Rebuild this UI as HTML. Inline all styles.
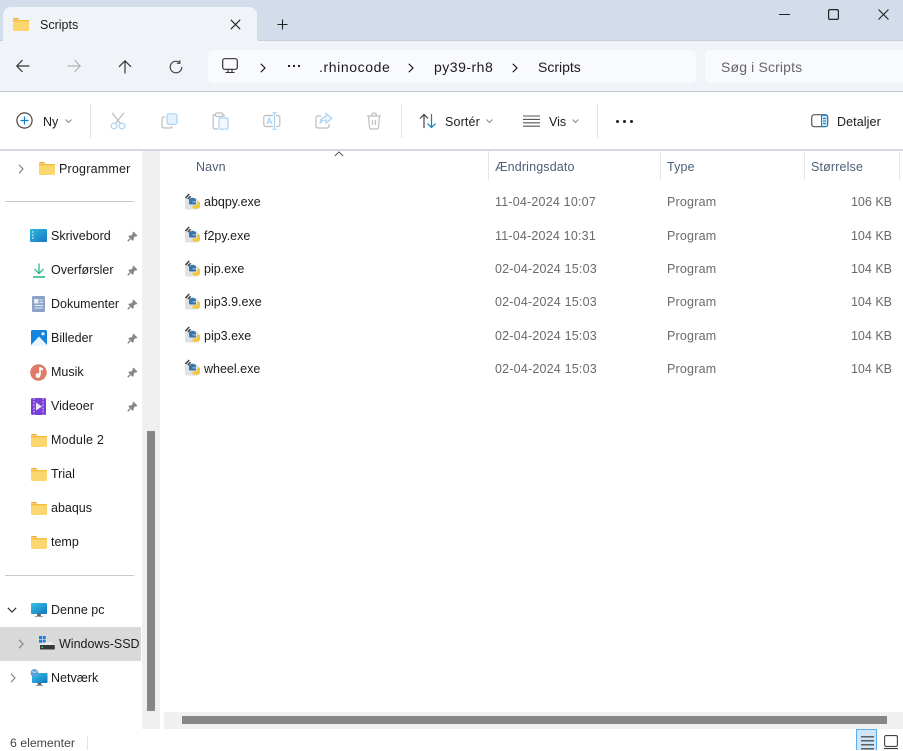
<!DOCTYPE html>
<html><head><meta charset="utf-8"><style>
html,body{margin:0;padding:0}
body{width:903px;height:750px;overflow:hidden;background:#fff;position:relative;font-family:"Liberation Sans",sans-serif;font-size:12.5px;color:#1b1b1b;filter:blur(.25px)}
.t{position:absolute;white-space:nowrap;line-height:16px}
.b{position:absolute}
svg{position:absolute;overflow:visible}
.n{font-size:12.5px}
.h{color:#4c607a;font-size:12.5px;letter-spacing:.15px}
.g{color:#6a6a6a;letter-spacing:.2px}
.r{text-align:right;width:60px;left:832px;color:#6a6a6a}
.s{fill:none;stroke:#333;stroke-width:1.2}
.d{fill:none;stroke:#bdbdbd;stroke-width:1.2}
.l{fill:none;stroke:#a9d3f5;stroke-width:1.2}
.f{color:#1b1b1b;font-size:12.5px}
</style></head><body>
<svg width="0" height="0" style="position:absolute"><defs>
<symbol id="folder" viewBox="0 0 16 13"><path d="M0 1.2Q0 0 1.2 0H5L6.5 1.5H0Z" fill="#e8a92c"/><path d="M0 2H14.8Q16 2 16 3.2V11.8Q16 13 14.8 13H1.2Q0 13 0 11.8Z" fill="#fcd66e"/><path d="M0 2H16V3.4H0Z" fill="#f4bf3e"/></symbol>
<symbol id="py" viewBox="0 0 17 17"><path d="M1 3.5H9L14.5 7V16.5H2.5Q1 16.5 1 15Z" fill="#dfe1e4"/><path d="M1.5 5L5.2 1M4 6L6.5 3.2" stroke="#3a3a3a" stroke-width="1.4" fill="none"/><path d="M5 10.5V7Q5 5 8.5 5T12 7V8.5H8.5V9.2H11.5Q12 9.2 12 10V11.5H7Q5 11.5 5 10.5Z" fill="#3776ab"/><path d="M16 9.5V13.5Q16 15.8 12 15.8T8.5 13.5V12.5H12V12.2Q12.8 12 13 11V8.5H15Q16 8.5 16 9.5Z" fill="#f5c63a"/></symbol>
<symbol id="pin" viewBox="0 0 12 12"><path d="M7 .6L11.4 5 10 6 8.9 5.8 7.3 7.5V9.8L6 10.6 1.5 6.1 2.3 4.9H4.6L6.2 3.2 6.1 1.9Z" fill="#868686"/><path d="M3.5 8.5L.8 11.2" stroke="#868686" stroke-width="1.5"/></symbol>
<symbol id="chev" viewBox="0 0 6 10"><path d="M1 .8L5 5 1 9.2" fill="none" stroke="#7d7d7d" stroke-width="1.1"/></symbol>
</defs></svg>

<!-- Title bar -->
<div class="b" style="left:0;top:0;width:903px;height:41px;background:#d3dcea"></div>
<div class="b" style="left:3px;top:7px;width:254px;height:34px;background:#f0f4f9;border-radius:8px 8px 0 0"></div>
<div class="b" style="left:0;top:41px;width:903px;height:50px;background:#f0f4f9"></div>
<div class="b" style="left:0;top:40px;width:903px;height:1px;background:#c9d0dd"></div>
<div class="b" style="left:3px;top:40px;width:255px;height:1px;background:#f0f4f9"></div>
<svg style="left:13px;top:18px" width="16" height="13"><use href="#folder" width="16" height="13"/></svg>
<div class="t" style="left:40px;top:17px">Scripts</div>
<svg style="left:230px;top:19px" width="11" height="11"><path d="M.8.8L10.2 10.2M10.2.8L.8 10.2" stroke="#222" stroke-width="1.1"/></svg>
<svg style="left:277px;top:19px" width="11" height="11"><path d="M5.5.5V10.5M.5 5.5H10.5" stroke="#222" stroke-width="1.1"/></svg>
<svg style="left:779px;top:14px" width="11" height="2"><path d="M0 .5H11" stroke="#222" stroke-width="1"/></svg>
<svg style="left:828px;top:9px" width="11" height="11"><rect x=".6" y=".6" width="9.8" height="9.8" rx="1.4" fill="none" stroke="#222" stroke-width="1.2"/></svg>
<svg style="left:878px;top:9px" width="11" height="11"><path d="M.5.5L10.5 10.5M10.5.5L.5 10.5" stroke="#222" stroke-width="1.1"/></svg>

<!-- Nav -->
<svg style="left:16px;top:59px" width="14" height="14"><path d="M.8 7H13.5M6.5 1L.8 7 6.5 13" fill="none" stroke="#333" stroke-width="1.2"/></svg>
<svg style="left:67px;top:59px" width="14" height="14"><path d="M.5 7H13.2M7.5 1L13.2 7 7.5 13" fill="none" stroke="#b3b5b8" stroke-width="1.2"/></svg>
<svg style="left:118px;top:60px" width="14" height="14"><path d="M7 .8V13.5M1 6.8L7 .8 13 6.8" fill="none" stroke="#333" stroke-width="1.2"/></svg>
<svg style="left:169px;top:60px" width="14" height="14"><path d="M12.8 7A5.8 5.8 0 1 1 10.5 2.4M10.8 .3V3.3H7.8" fill="none" stroke="#444" stroke-width="1.2"/></svg>
<div class="b" style="left:208px;top:50px;width:488px;height:33px;background:#f9fafd;border-radius:5px"></div>
<div class="b" style="left:705px;top:50px;width:198px;height:33px;background:#f9fafd;border-radius:5px 0 0 5px"></div>
<svg style="left:222px;top:58px" width="17" height="16"><rect x=".7" y=".7" width="14.6" height="10.6" rx="2" fill="none" stroke="#333" stroke-width="1.2"/><path d="M6 11.5V14M10 11.5V14M3.5 14.5H12.5" fill="none" stroke="#333" stroke-width="1.1"/></svg>
<svg style="left:260px;top:63px" width="6" height="10"><path d="M.8.8L5 5 .8 9.2" fill="none" stroke="#222" stroke-width="1.2"/></svg>
<div class="b" style="left:288px;top:65px;width:2px;height:2px;background:#222;box-shadow:5px 0 #222,10px 0 #222"></div>
<div class="t" style="left:319px;top:59px;font-size:14px;letter-spacing:.6px">.rhinocode</div>
<svg style="left:408px;top:63px" width="6" height="10"><path d="M.8.8L5 5 .8 9.2" fill="none" stroke="#222" stroke-width="1.2"/></svg>
<div class="t" style="left:434px;top:59px;font-size:14px;letter-spacing:.5px">py39-rh8</div>
<svg style="left:512px;top:63px" width="6" height="10"><path d="M.8.8L5 5 .8 9.2" fill="none" stroke="#222" stroke-width="1.2"/></svg>
<div class="t" style="left:538px;top:59px;font-size:14px">Scripts</div>
<div class="t" style="left:721px;top:59px;font-size:14px;color:#666;letter-spacing:.15px">Søg i Scripts</div>

<div class="b" style="left:0;top:91px;width:903px;height:1px;background:#bfc5d2"></div>

<!-- Toolbar -->
<svg style="left:16px;top:112px" width="17" height="17"><circle cx="8.5" cy="8.5" r="7.6" fill="none" stroke="#444" stroke-width="1.2"/><path d="M8.5 4.5V12.5M4.5 8.5H12.5" stroke="#0b7fd4" stroke-width="1.2"/></svg>
<div class="t" style="left:43px;top:114px">Ny</div>
<svg style="left:65px;top:119px" width="7" height="5"><path d="M.5.5L3.5 3.5 6.5.5" fill="none" stroke="#888" stroke-width="1"/></svg>
<div class="b" style="left:90px;top:104px;width:1px;height:34px;background:#e3e3e3"></div>
<svg style="left:110px;top:112px" width="16" height="18"><path d="M2 .8L10.5 11.5M14 .8L5.5 11.5" class="d"/><circle cx="4" cy="14" r="2.9" class="l"/><circle cx="12" cy="14" r="2.9" class="l"/></svg>
<svg style="left:161px;top:113px" width="17" height="16"><path d="M4 4H2.8Q1 4 1 6V12.5Q1 15 3.5 15H9Q11 15 11 13.5" class="d"/><rect x="6" y=".8" width="10" height="10.5" rx="2" fill="#e4f2fd" stroke="#a9d3f5" stroke-width="1.2"/></svg>
<svg style="left:212px;top:112px" width="17" height="18"><path d="M10 3H12V5M3 3H1.2V15Q1.2 17 3 17H6" class="d"/><rect x="3.5" y="1" width="7" height="3.5" rx="1.2" class="d"/><rect x="7" y="6" width="9" height="11.2" rx="1.5" fill="#f1f8fe" stroke="#a9d3f5" stroke-width="1.2"/></svg>
<svg style="left:263px;top:112px" width="18" height="18"><rect x=".8" y="3.5" width="16" height="11" rx="2" class="d"/><rect x="10" y="1" width="3" height="16" fill="#fff"/><path d="M9.5.7H13.5M11.5.7V17.3M9.5 17.3H13.5" class="l"/><path d="M3.8 12L6.3 6 8.8 12M4.8 10H7.8" class="l"/></svg>
<svg style="left:315px;top:112px" width="18" height="17"><path d="M6 4H3Q1 4 1 6V14Q1 16 3 16H12Q14 16 14 14V12" class="d"/><path d="M11 1.5L16.8 6.5 11 11V8.3Q7 8 5 11.5 5.5 5.5 11 4.7Z" fill="#eef7fe" stroke="#a9d3f5" stroke-width="1.2"/></svg>
<svg style="left:366px;top:112px" width="16" height="18"><path d="M1 4H15M2.5 4L3.5 15.5Q3.7 17 5 17H11Q12.3 17 12.5 15.5L13.5 4M5.5 4Q5.5 1 8 1T10.5 4M6.5 8V13M9.5 8V13" class="d"/></svg>
<div class="b" style="left:401px;top:104px;width:1px;height:34px;background:#e3e3e3"></div>
<svg style="left:419px;top:113px" width="18" height="16"><path d="M5 15V1.5M1 5.5L5 1.5 9 5.5" fill="none" stroke="#333" stroke-width="1.1"/><path d="M12.5 1V14.5M8.5 10.5L12.5 14.5 16.5 10.5" fill="none" stroke="#0b7fd4" stroke-width="1.2"/></svg>
<div class="t" style="left:445px;top:114px;letter-spacing:.15px">Sortér</div>
<svg style="left:486px;top:119px" width="7" height="5"><path d="M.5.5L3.5 3.5 6.5.5" fill="none" stroke="#888" stroke-width="1"/></svg>
<svg style="left:523px;top:115px" width="18" height="12"><path d="M0 1H17M0 4.4H17M0 7.8H17M0 11.2H17" stroke="#555" stroke-width="1.1"/></svg>
<div class="t" style="left:549px;top:114px">Vis</div>
<svg style="left:572px;top:119px" width="7" height="5"><path d="M.5.5L3.5 3.5 6.5.5" fill="none" stroke="#888" stroke-width="1"/></svg>
<div class="b" style="left:597px;top:104px;width:1px;height:34px;background:#e3e3e3"></div>
<div class="b" style="left:616px;top:120px;width:3px;height:3px;border-radius:50%;background:#222;box-shadow:7px 0 #222,14px 0 #222"></div>
<svg style="left:811px;top:114px" width="18" height="14"><rect x=".7" y=".7" width="16" height="12" rx="2.5" fill="none" stroke="#555" stroke-width="1.2"/><path d="M10.5 1.2H14.5Q16.5 1.2 16.5 3V11Q16.5 12.5 14.5 12.5H10.5Z" fill="#cfe7fa" stroke="#0b7fd4" stroke-width="1"/><path d="M12 4.5H15M12 7H15M12 9.5H15" stroke="#0b7fd4" stroke-width="1"/></svg>
<div class="t" style="left:837px;top:114px;letter-spacing:.1px">Detaljer</div>

<div class="b" style="left:0;top:149px;width:903px;height:2px;background:#d5d8e2"></div>

<!-- Sidebar -->
<svg style="left:18px;top:164px" width="6" height="10"><use href="#chev" width="6" height="10"/></svg>
<svg style="left:39px;top:162px" width="16" height="13"><use href="#folder" width="16" height="13"/></svg>
<div class="t f" style="left:59px;top:161px;letter-spacing:.2px">Programmer</div>
<div class="b" style="left:5px;top:201px;width:129px;height:1px;background:#c9c9c9"></div>

<svg style="left:30px;top:229px" width="17" height="14"><defs><linearGradient id="gd" x1="0" y1="0" x2="1" y2="1"><stop offset="0" stop-color="#2ab7dc"/><stop offset="1" stop-color="#1a78c2"/></linearGradient></defs><rect width="17" height="13" rx="1" fill="url(#gd)"/><path d="M2 3H3.5M2 6H3.5M2 9H3.5" stroke="#dff4fb" stroke-width="1.2"/></svg>
<div class="t f" style="left:51px;top:228px">Skrivebord</div>
<svg style="left:127px;top:231px" width="11" height="11"><use href="#pin" width="11" height="11"/></svg>

<svg style="left:32px;top:263px" width="14" height="15"><path d="M7 .5V10.5M2.5 6L7 10.5 11.5 6" fill="none" stroke="#1fb285" stroke-width="1.2"/><path d="M1 14H13" stroke="#1fb285" stroke-width="1.5"/></svg>
<div class="t f" style="left:51px;top:262px">Overførsler</div>
<svg style="left:127px;top:265px" width="11" height="11"><use href="#pin" width="11" height="11"/></svg>

<svg style="left:32px;top:296px" width="14" height="17"><rect width="13" height="16" rx="1" fill="#8ba3c8"/><path d="M2.5 3.5H6V7H2.5Z M7.5 4H11 M7.5 6.5H11 M2.5 9.5H11 M2.5 12H11" fill="#e7edf6" stroke="#e7edf6" stroke-width="1"/></svg>
<div class="t f" style="left:51px;top:296px">Dokumenter</div>
<svg style="left:127px;top:299px" width="11" height="11"><use href="#pin" width="11" height="11"/></svg>

<svg style="left:31px;top:330px" width="16" height="16"><rect width="16" height="16" rx="1.5" fill="#1584dc"/><path d="M0 15L8 6.5 16 15V16H0Z" fill="#eaf5fd"/><circle cx="12" cy="3.8" r="1.6" fill="#eaf5fd"/></svg>
<div class="t f" style="left:51px;top:330px">Billeder</div>
<svg style="left:127px;top:333px" width="11" height="11"><use href="#pin" width="11" height="11"/></svg>

<svg style="left:30px;top:364px" width="17" height="17"><circle cx="8.5" cy="8.5" r="8.3" fill="#de7c68"/><path d="M10 3V11" stroke="#fff" stroke-width="1.6"/><path d="M10 3L13 4.5V6.5L10 5.5Z" fill="#fff"/><circle cx="8" cy="11.5" r="2.4" fill="#fff"/></svg>
<div class="t f" style="left:51px;top:364px">Musik</div>
<svg style="left:127px;top:367px" width="11" height="11"><use href="#pin" width="11" height="11"/></svg>

<svg style="left:31px;top:398px" width="15" height="17"><rect width="15" height="17" rx="1.5" fill="#7a3fd6"/><path d="M3 0V17M12 0V17" stroke="#c8a9f2" stroke-width="1.4" stroke-dasharray="1.6 1.6"/><path d="M5 4.5L11 8.5 5 12.5Z" fill="#efe6fd"/></svg>
<div class="t f" style="left:51px;top:398px">Videoer</div>
<svg style="left:127px;top:401px" width="11" height="11"><use href="#pin" width="11" height="11"/></svg>

<svg style="left:31px;top:434px" width="16" height="13"><use href="#folder" width="16" height="13"/></svg>
<div class="t f" style="left:51px;top:432px;letter-spacing:.2px">Module 2</div>
<svg style="left:31px;top:468px" width="16" height="13"><use href="#folder" width="16" height="13"/></svg>
<div class="t f" style="left:51px;top:466px">Trial</div>
<svg style="left:31px;top:502px" width="16" height="13"><use href="#folder" width="16" height="13"/></svg>
<div class="t f" style="left:51px;top:500px">abaqus</div>
<svg style="left:31px;top:536px" width="16" height="13"><use href="#folder" width="16" height="13"/></svg>
<div class="t f" style="left:51px;top:534px">temp</div>
<div class="b" style="left:5px;top:575px;width:129px;height:1px;background:#c9c9c9"></div>

<svg style="left:7px;top:607px" width="10" height="6"><path d="M.8.8L5 5 9.2.8" fill="none" stroke="#333" stroke-width="1.2"/></svg>
<svg style="left:31px;top:603px" width="16" height="15"><defs><linearGradient id="gm" x1="0" y1="0" x2="1" y2="1"><stop offset="0" stop-color="#35c4e4"/><stop offset="1" stop-color="#1274c0"/></linearGradient></defs><rect width="16" height="11" rx="1" fill="url(#gm)"/><path d="M6.5 11H9.5V13H6.5ZM4 13.3H12" fill="#666" stroke="#666" stroke-width=".7"/></svg>
<div class="t f" style="left:51px;top:602px">Denne pc</div>

<div class="b" style="left:0;top:627px;width:141px;height:34px;background:#d9d9d9"></div>
<svg style="left:18px;top:639px" width="6" height="10"><use href="#chev" width="6" height="10"/></svg>
<svg style="left:39px;top:636px" width="16" height="16"><rect width="3" height="3" fill="#1d7fd8"/><rect x="3.7" width="3" height="3" fill="#1d7fd8"/><rect y="3.7" width="3" height="3" fill="#1d7fd8"/><rect x="3.7" y="3.7" width="3" height="3" fill="#1d7fd8"/><path d="M1 7.5L8 6H13L15.5 9H1Z" fill="#eaeaea"/><rect x="1" y="9" width="14.8" height="4.5" rx=".6" fill="#3a3a3a"/><rect x="2.5" y="10.5" width="1.6" height="1.5" fill="#3fd06a"/></svg>
<div class="t f" style="left:59px;top:636px">Windows-SSD</div>

<svg style="left:10px;top:673px" width="6" height="10"><use href="#chev" width="6" height="10"/></svg>
<svg style="left:30px;top:669px" width="18" height="18"><rect x="2" y="4" width="15.5" height="10" rx="1" fill="url(#gm)"/><path d="M8 14H11V16H8ZM6 16.3H13" fill="#666" stroke="#666" stroke-width=".7"/><circle cx="4.5" cy="4" r="3.9" fill="#5d9fd8"/><path d="M2 2.5Q4.5 4 7 2.5" stroke="#dcecf8" fill="none" stroke-width=".8"/></svg>
<div class="t f" style="left:51px;top:670px">Netværk</div>

<!-- Vertical scrollbar -->
<div class="b" style="left:142px;top:151px;width:18px;height:578px;background:#f0f0f0"></div>
<div class="b" style="left:147px;top:431px;width:8px;height:280px;background:#868686"></div>

<!-- Columns -->
<svg style="left:334px;top:151px" width="10" height="6"><path d="M.8 5L5 1 9.2 5" fill="none" stroke="#555" stroke-width="1"/></svg>
<div class="t h" style="left:196px;top:159px">Navn</div>
<div class="b" style="left:488px;top:151px;width:1px;height:29px;background:#e3e5e9"></div>
<div class="t h" style="left:495px;top:159px">Ændringsdato</div>
<div class="b" style="left:660px;top:151px;width:1px;height:29px;background:#e3e5e9"></div>
<div class="t h" style="left:667px;top:159px">Type</div>
<div class="b" style="left:804px;top:151px;width:1px;height:29px;background:#e3e5e9"></div>
<div class="t h" style="left:811px;top:159px">Størrelse</div>
<div class="b" style="left:899px;top:151px;width:1px;height:29px;background:#e3e5e9"></div>

<!-- Rows -->
<svg style="left:184px;top:193px" width="17" height="17"><use href="#py" width="17" height="17"/></svg>
<div class="t n" style="left:204px;top:194px">abqpy.exe</div><div class="t g" style="left:495px;top:194px">11-04-2024 10:07</div><div class="t g" style="left:667px;top:194px">Program</div><div class="t r" style="top:194px">106 KB</div>

<svg style="left:184px;top:226px" width="17" height="17"><use href="#py" width="17" height="17"/></svg>
<div class="t n" style="left:204px;top:228px">f2py.exe</div><div class="t g" style="left:495px;top:228px">11-04-2024 10:31</div><div class="t g" style="left:667px;top:228px">Program</div><div class="t r" style="top:228px">104 KB</div>

<svg style="left:184px;top:260px" width="17" height="17"><use href="#py" width="17" height="17"/></svg>
<div class="t n" style="left:204px;top:261px">pip.exe</div><div class="t g" style="left:495px;top:261px">02-04-2024 15:03</div><div class="t g" style="left:667px;top:261px">Program</div><div class="t r" style="top:261px">104 KB</div>

<svg style="left:184px;top:293px" width="17" height="17"><use href="#py" width="17" height="17"/></svg>
<div class="t n" style="left:204px;top:294px">pip3.9.exe</div><div class="t g" style="left:495px;top:294px">02-04-2024 15:03</div><div class="t g" style="left:667px;top:294px">Program</div><div class="t r" style="top:294px">104 KB</div>

<svg style="left:184px;top:326px" width="17" height="17"><use href="#py" width="17" height="17"/></svg>
<div class="t n" style="left:204px;top:328px">pip3.exe</div><div class="t g" style="left:495px;top:328px">02-04-2024 15:03</div><div class="t g" style="left:667px;top:328px">Program</div><div class="t r" style="top:328px">104 KB</div>

<svg style="left:184px;top:359px" width="17" height="17"><use href="#py" width="17" height="17"/></svg>
<div class="t n" style="left:204px;top:361px">wheel.exe</div><div class="t g" style="left:495px;top:361px">02-04-2024 15:03</div><div class="t g" style="left:667px;top:361px">Program</div><div class="t r" style="top:361px">104 KB</div>

<!-- Horizontal scrollbar -->
<div class="b" style="left:164px;top:712px;width:739px;height:17px;background:#f0f0f0"></div>
<div class="b" style="left:182px;top:716px;width:705px;height:8px;background:#868686"></div>

<!-- Status -->
<div class="t" style="left:10px;top:735px;color:#444;font-size:12.3px">6 elementer</div>
<div class="b" style="left:87px;top:736px;width:1px;height:14px;background:#e5e5e5"></div>
<div class="b" style="left:856px;top:729px;width:21px;height:21px;background:#cfe6fa;border:1px solid #5aaef0;border-bottom:0;box-sizing:border-box"></div>
<svg style="left:861px;top:736px" width="14" height="14"><path d="M0 .8H13M0 4.8H13M0 8.8H13M0 12.8H13" stroke="#333" stroke-width="1.1"/></svg>
<svg style="left:884px;top:735px" width="14" height="15"><rect x=".6" y=".6" width="12.8" height="10.8" rx="1.5" fill="none" stroke="#444" stroke-width="1.1"/><path d="M0 13.5H14" stroke="#333" stroke-width="1.1"/></svg>
</body></html>
